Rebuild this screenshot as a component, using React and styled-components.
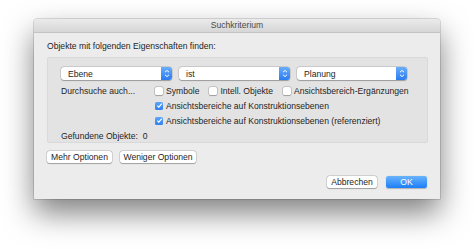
import styled, { createGlobalStyle } from "styled-components";

const Global = createGlobalStyle`
  html, body {
    margin: 0;
    padding: 0;
    background: #ffffff;
  }
  body {
    width: 474px;
    height: 249px;
    overflow: hidden;
    font-family: "Liberation Sans", Arial, sans-serif;
    font-size: 8.6px;
    color: #1e1e1e;
  }
`;

const Page = styled.div`
  padding: 19px 0 0 34px;
`;

const Window = styled.div`
  width: 406px;
  height: 180px;
  background: #ececec;
  border-radius: 3px 3px 0 0;
  box-shadow: 0 14px 30px rgba(0, 0, 0, 0.5), 0 0 0 0.5px rgba(0, 0, 0, 0.25);
  display: flex;
  flex-direction: column;
  box-sizing: border-box;
`;

const TitleBar = styled.div`
  height: 13px;
  line-height: 13px;
  text-align: center;
  color: #4a4a4a;
  background: linear-gradient(#ebebeb, #d6d6d6);
  border-bottom: 1px solid #c4c4c4;
  border-radius: 3px 3px 0 0;
`;

const Content = styled.div`
  flex: 1;
  display: flex;
  flex-direction: column;
  padding: 8px 12px 11px 13px;
`;

const Heading = styled.div`
  height: 10px;
  line-height: 10px;
  margin-bottom: 6px;
`;

const Panel = styled.div`
  background: #e3e3e3;
  border: 1px solid #d9d9d9;
  border-radius: 2px;
  height: 86px;
  box-sizing: border-box;
  padding: 9px 0 0 13px;
`;

const PopupRow = styled.div`
  display: flex;
  gap: 7px;
  margin-bottom: 3px;
`;

const Popup = styled.div`
  width: ${(p) => p.w}px;
  height: 13px;
  box-sizing: border-box;
  background: #fff;
  border-radius: 3px;
  box-shadow: 0 0 0 0.5px rgba(0, 0, 0, 0.18), 0 0.5px 1px rgba(0, 0, 0, 0.25);
  display: flex;
  align-items: center;
  padding-left: 7px;
  position: relative;
`;

const Stepper = styled.div`
  position: absolute;
  right: 0;
  top: 0;
  bottom: 0;
  width: 11px;
  border-radius: 0 3px 3px 0;
  background: linear-gradient(#69aefa, #2b7bf0);
  display: flex;
  align-items: center;
  justify-content: center;
`;

const Row = styled.div`
  display: flex;
  align-items: center;
  height: 15px;
`;

const Label = styled.div`
  width: 94px;
  flex-shrink: 0;
`;

const Spacer = styled.div`
  width: 94px;
  flex-shrink: 0;
`;

const Options = styled.div`
  display: flex;
  gap: 10px;
`;

const Check = styled.label`
  display: flex;
  align-items: center;
  gap: 3px;
  white-space: nowrap;
`;

const Box = styled.span`
  width: 8px;
  height: 8px;
  border-radius: 1.5px;
  box-sizing: border-box;
  background: ${(p) => (p.checked ? "linear-gradient(#5ea6fa, #2f80f2)" : "#fff")};
  box-shadow: ${(p) =>
    p.checked ? "none" : "0 0 0 0.5px rgba(0,0,0,0.25), 0 0.5px 1px rgba(0,0,0,0.2)"};
  display: flex;
  align-items: center;
  justify-content: center;
`;

const ButtonRow = styled.div`
  display: flex;
  gap: 8px;
  margin-top: 8px;
`;

const Footer = styled.div`
  margin-top: auto;
  display: flex;
  justify-content: flex-end;
  gap: 9px;
  padding-right: 1px;
`;

const Button = styled.button`
  font: inherit;
  color: #1e1e1e;
  height: 12px;
  padding: 0;
  width: ${(p) => p.w}px;
  border: none;
  border-radius: 2.5px;
  background: #fff;
  box-shadow: 0 0 0 0.5px rgba(0, 0, 0, 0.2), 0 0.5px 1px rgba(0, 0, 0, 0.25);
  line-height: 12px;
`;

const PrimaryButton = styled(Button)`
  color: #fff;
  background: linear-gradient(#6ab3fb, #1c7ff7);
  box-shadow: 0 0.5px 1px rgba(0, 0, 0, 0.25);
`;

function Arrows() {
  return (
    <svg width="6" height="9" viewBox="0 0 6 9">
      <path d="M1 3.2 L3 1.4 L5 3.2 M1 5.8 L3 7.6 L5 5.8" fill="none" stroke="#fff" strokeWidth="1" />
    </svg>
  );
}

function Tick() {
  return (
    <svg width="7" height="7" viewBox="0 0 7 7">
      <path d="M1.3 3.6 L2.8 5.1 L5.8 1.6" fill="none" stroke="#fff" strokeWidth="1.2" />
    </svg>
  );
}

function CheckItem({ checked, children }) {
  return (
    <Check>
      <Box checked={checked}>{checked && <Tick />}</Box>
      {children}
    </Check>
  );
}

export default function App() {
  return (
    <Page>
      <Global />
      <Window>
        <TitleBar>Suchkriterium</TitleBar>
        <Content>
          <Heading>Objekte mit folgenden Eigenschaften finden:</Heading>
          <Panel>
            <PopupRow>
              <Popup w={111}>
                Ebene
                <Stepper><Arrows /></Stepper>
              </Popup>
              <Popup w={111}>
                ist
                <Stepper><Arrows /></Stepper>
              </Popup>
              <Popup w={110}>
                Planung
                <Stepper><Arrows /></Stepper>
              </Popup>
            </PopupRow>
            <Row>
              <Label>Durchsuche auch...</Label>
              <Options>
                <CheckItem>Symbole</CheckItem>
                <CheckItem>Intell. Objekte</CheckItem>
                <CheckItem>Ansichtsbereich-Ergänzungen</CheckItem>
              </Options>
            </Row>
            <Row>
              <Spacer />
              <CheckItem checked>Ansichtsbereiche auf Konstruktionsebenen</CheckItem>
            </Row>
            <Row>
              <Spacer />
              <CheckItem checked>Ansichtsbereiche auf Konstruktionsebenen (referenziert)</CheckItem>
            </Row>
            <Row>
              <Label>Gefundene Objekte:&nbsp; 0</Label>
            </Row>
          </Panel>
          <ButtonRow>
            <Button w={65}>Mehr Optionen</Button>
            <Button w={76}>Weniger Optionen</Button>
          </ButtonRow>
          <Footer>
            <Button w={50}>Abbrechen</Button>
            <PrimaryButton w={41}>OK</PrimaryButton>
          </Footer>
        </Content>
      </Window>
    </Page>
  );
}
